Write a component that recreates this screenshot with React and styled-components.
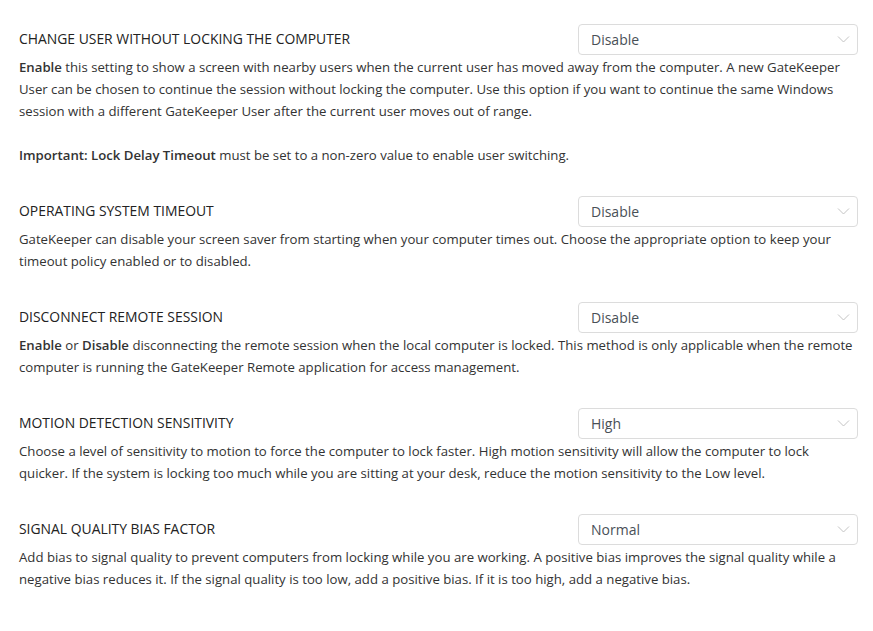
import React, { useState } from "react";
import styled, { createGlobalStyle } from "styled-components";

const GlobalStyle = createGlobalStyle`
  html, body {
    margin: 0;
    padding: 0;
    background: #ffffff;
  }
  body {
    font-family: "Open Sans", "Liberation Sans", sans-serif;
    color: #333333;
  }
`;

const Page = styled.div`
  padding: 23px 15px 24px 19px;
  display: flex;
  flex-direction: column;
  gap: 29px;
`;

const Section = styled.section`
  display: flex;
  flex-direction: column;
  gap: 1px;
`;

const Header = styled.div`
  display: flex;
  align-items: center;
  justify-content: space-between;
  height: 32px;
`;

const Title = styled.h3`
  margin: 0;
  padding-bottom: 2px;
  font-size: 13.9px;
  font-weight: 400;
  color: #222222;
  text-transform: uppercase;
`;

const SelectBox = styled.div`
  position: relative;
  width: 280px;
  height: 31px;
  box-sizing: border-box;
`;

const Select = styled.select`
  appearance: none;
  width: 100%;
  height: 100%;
  box-sizing: border-box;
  border: 1px solid #dcdcdc;
  border-radius: 4px;
  background: #ffffff;
  padding: 0 30px 0 12px;
  font-family: "Open Sans", "Liberation Sans", sans-serif;
  font-size: 14px;
  color: #495057;
  outline: none;
`;

const Chevron = styled.svg`
  position: absolute;
  right: 8px;
  top: 10px;
  pointer-events: none;
`;

const Text = styled.p`
  margin: 0;
  font-size: 13.2px;
  line-height: 22px;
  color: #333333;
  & + & {
    margin-top: 21px;
  }
  b {
    font-weight: 600;
  }
`;

const settings = [
  {
    title: "Change user without locking the computer",
    value: "Disable",
    options: ["Disable", "Enable"],
    body: [
      <>
        <b>Enable</b> this setting to show a screen with nearby users when the
        current user has moved away from the computer. A new GateKeeper User can
        be chosen to continue the session without locking the computer. Use this
        option if you want to continue the same Windows session with a different
        GateKeeper User after the current user moves out of range.
      </>,
      <>
        <b>Important: Lock Delay Timeout</b> must be set to a non-zero value to
        enable user switching.
      </>,
    ],
  },
  {
    title: "Operating system timeout",
    value: "Disable",
    options: ["Disable", "Enable"],
    body: [
      <>
        GateKeeper can disable your screen saver from starting when your
        computer times out. Choose the appropriate option to keep your timeout
        policy enabled or to disabled.
      </>,
    ],
  },
  {
    title: "Disconnect remote session",
    value: "Disable",
    options: ["Disable", "Enable"],
    body: [
      <>
        <b>Enable</b> or <b>Disable</b> disconnecting the remote session when the
        local computer is locked. This method is only applicable when the remote
        computer is running the GateKeeper Remote application for access
        management.
      </>,
    ],
  },
  {
    title: "Motion detection sensitivity",
    value: "High",
    options: ["Low", "Medium", "High"],
    body: [
      <>
        Choose a level of sensitivity to motion to force the computer to lock
        faster. High motion sensitivity will allow the computer to lock quicker.
        If the system is locking too much while you are sitting at your desk,
        reduce the motion sensitivity to the Low level.
      </>,
    ],
  },
  {
    title: "Signal quality bias factor",
    value: "Normal",
    options: ["Negative", "Normal", "Positive"],
    body: [
      <>
        Add bias to signal quality to prevent computers from locking while you
        are working. A positive bias improves the signal quality while a
        negative bias reduces it. If the signal quality is too low, add a
        positive bias. If it is too high, add a negative bias.
      </>,
    ],
  },
];

const Setting = ({ title, value, options, body }) => {
  const [current, setCurrent] = useState(value);
  return (
    <Section>
      <Header>
        <Title>{title}</Title>
        <SelectBox>
          <Select value={current} onChange={(e) => setCurrent(e.target.value)}>
            {options.map((o) => (
              <option key={o}>{o}</option>
            ))}
          </Select>
          <Chevron width="13" height="10" viewBox="0 0 13 10">
            <path d="M1 2.5 L6.5 8 L12 2.5" fill="none" stroke="#c4c4c4" strokeWidth="1" />
          </Chevron>
        </SelectBox>
      </Header>
      {body.map((b, i) => (
        <Text key={i}>{b}</Text>
      ))}
    </Section>
  );
};

const App = () => (
  <>
    <GlobalStyle />
    <Page>
      {settings.map((s) => (
        <Setting key={s.title} {...s} />
      ))}
    </Page>
  </>
);

export default App;
